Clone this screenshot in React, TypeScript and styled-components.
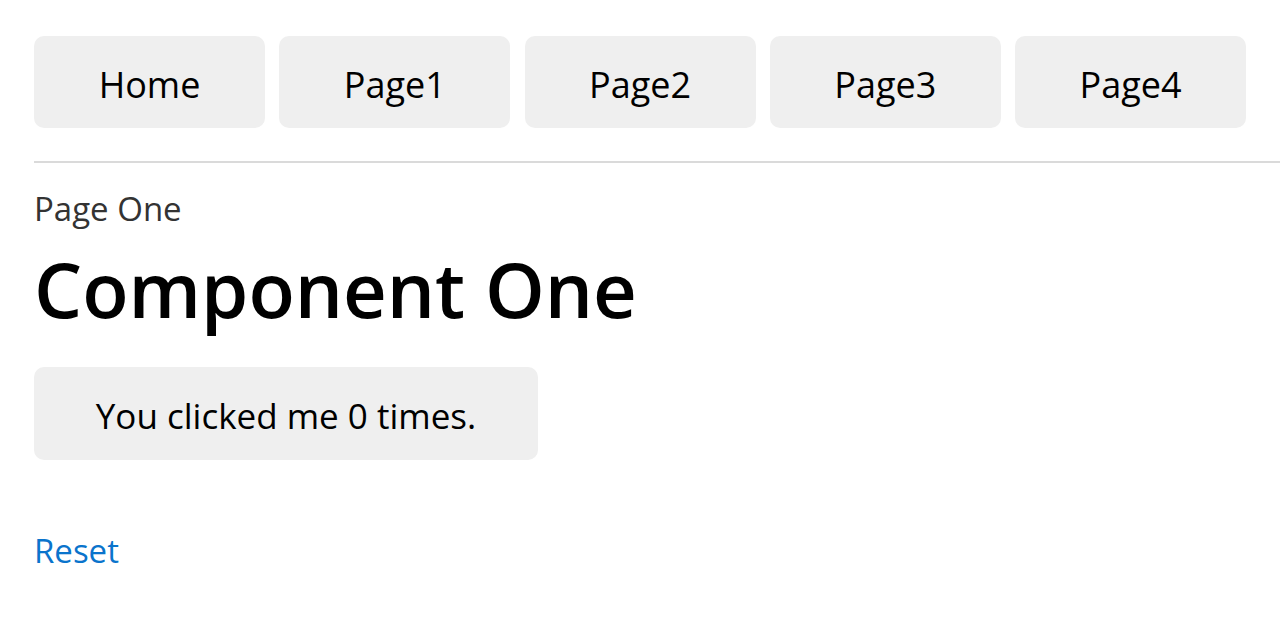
import React, { useState } from 'react';
import styled, { createGlobalStyle } from 'styled-components';

const GlobalStyle = createGlobalStyle`
  html, body {
    margin: 0;
    padding: 0;
    background: #ffffff;
  }
  body {
    font-family: "Open Sans", "Noto Sans", sans-serif;
    color: #000000;
  }
`;

const Page = styled.div`
  padding: 36px 0 0 34px;
`;

const Nav = styled.nav`
  display: flex;
  gap: 14.25px;
`;

const NavButton = styled.button`
  flex: 0 0 231px;
  height: 92px;
  padding: 5px 0 0 0;
  border: none;
  border-radius: 10px;
  background: #efefef;
  font-family: inherit;
  font-size: 36px;
  color: #000000;
  cursor: pointer;
`;

const Divider = styled.hr`
  margin: 33px 0 0 0;
  border: none;
  border-top: 2px solid #dadada;
`;

const PageLabel = styled.div`
  margin-top: 26px;
  font-size: 33px;
  line-height: 40px;
  color: #333333;
`;

const Title = styled.h1`
  margin: 10px 0 0 0;
  font-size: 76px;
  font-weight: 600;
  line-height: 100px;
`;

const CounterButton = styled.button`
  display: block;
  margin-top: 28px;
  width: 504px;
  height: 93px;
  padding: 4px 0 0 0;
  border: none;
  border-radius: 10px;
  background: #efefef;
  font-family: inherit;
  font-size: 35px;
  color: #000000;
  cursor: pointer;
`;

const ResetLink = styled.a`
  display: block;
  width: fit-content;
  margin-top: 71px;
  font-size: 33px;
  line-height: 40px;
  color: #0a74cc;
  text-decoration: none;
  cursor: pointer;
`;

const pages = ['Home', 'Page1', 'Page2', 'Page3', 'Page4'];

export default function App() {
  const [count, setCount] = useState(0);

  return (
    <Page>
      <GlobalStyle />
      <Nav>
        {pages.map((p) => (
          <NavButton key={p}>{p}</NavButton>
        ))}
      </Nav>
      <Divider />
      <PageLabel>Page One</PageLabel>
      <Title>Component One</Title>
      <CounterButton onClick={() => setCount(count + 1)}>
        You clicked me {count} times.
      </CounterButton>
      <ResetLink onClick={() => setCount(0)}>Reset</ResetLink>
    </Page>
  );
}
